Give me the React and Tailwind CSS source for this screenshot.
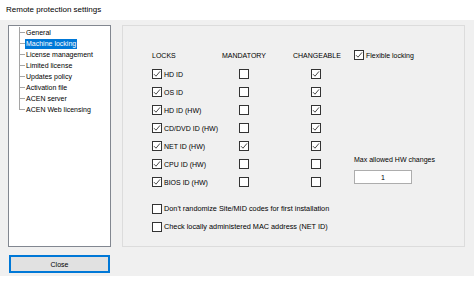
const treeItems = [
  "General",
  "Machine locking",
  "License management",
  "Limited license",
  "Updates policy",
  "Activation file",
  "ACEN server",
  "ACEN Web licensing",
]

const locks = [
  { name: "HD ID", mandatory: false, changeable: true },
  { name: "OS ID", mandatory: false, changeable: true },
  { name: "HD ID (HW)", mandatory: false, changeable: true },
  { name: "CD/DVD ID (HW)", mandatory: false, changeable: true },
  { name: "NET ID (HW)", mandatory: true, changeable: true },
  { name: "CPU ID (HW)", mandatory: false, changeable: false },
  { name: "BIOS ID (HW)", mandatory: false, changeable: false },
]

function Box({ checked }) {
  return (
    <div className="w-[10px] h-[10px] shrink-0 border border-[#333333] bg-white flex items-center justify-center">
      {checked && (
        <svg width="8" height="8" viewBox="0 0 8 8">
          <path d="M1 4.2 L3 6.2 L7 1.4" fill="none" stroke="#333333" strokeWidth="0.9" />
        </svg>
      )}
    </div>
  )
}

function Check({ checked, label }) {
  return (
    <div className="flex items-center gap-[2px]">
      <Box checked={checked} />
      <span>{label}</span>
    </div>
  )
}

export default function App() {
  return (
    <div
      className="w-[474px] h-[281px] bg-[#f0f0f0] flex flex-col text-black text-[7px] leading-none"
      style={{ fontFamily: '"Liberation Sans", Arial, sans-serif' }}
    >
      <div className="h-[20px] bg-white flex items-center pl-[6px] text-[8px]">Remote protection settings</div>

      <div className="flex pl-[8px] pt-[5px] gap-[11px]">
        <div className="flex flex-col w-[103px]">
          <div className="h-[222px] bg-white border border-[#828790] pt-[1px] pl-[10px]">
            {treeItems.map((item, i) => (
              <div key={item} className="flex items-center h-[11px]">
                <div className="w-[6px] self-stretch flex flex-col">
                  <div className="flex-1 border-l border-b border-[#a5a5a5]" />
                  <div className={i === treeItems.length - 1 ? "flex-1" : "flex-1 border-l border-[#a5a5a5]"} />
                </div>
                <span
                  className={
                    i === 1
                      ? "bg-[#0078d7] text-white px-[1px] h-[10px] flex items-center"
                      : "px-[1px] h-[10px] flex items-center"
                  }
                >
                  {item}
                </span>
              </div>
            ))}
          </div>
          <div className="mt-[8px] ml-[1px] w-[101px] h-[18px] bg-[#e1e1e1] border border-[#0078d7] shadow-[inset_0_0_0_1px_#0078d7] flex items-center justify-center">
            Close
          </div>
        </div>

        <div className="w-[343px] h-[222px] border border-[#dcdcdc] pl-[29px] pt-[19px]">
          <div className="flex">
            <div className="flex flex-col">
              <div className="flex h-[20px] items-center">
                <div className="w-[70px]">LOCKS</div>
                <div className="w-[71px]">MANDATORY</div>
                <div className="w-[61px]">CHANGEABLE</div>
              </div>
              {locks.map((l) => (
                <div key={l.name} className="flex h-[18px] items-center">
                  <div className="w-[70px]">
                    <Check checked label={l.name} />
                  </div>
                  <div className="w-[71px]">
                    <div className="w-[44px] flex justify-center">
                      <Box checked={l.mandatory} />
                    </div>
                  </div>
                  <div className="w-[61px]">
                    <div className="w-[46px] flex justify-center">
                      <Box checked={l.changeable} />
                    </div>
                  </div>
                </div>
              ))}
            </div>
            <div className="flex flex-col">
              <div className="h-[20px] flex items-center">
                <Check checked label="Flexible locking" />
              </div>
              <div className="mt-[91px]">Max allowed HW changes</div>
              <div className="mt-[7px] w-[58px] h-[14px] bg-white border border-[#adadad] flex items-center justify-center">
                1
              </div>
            </div>
          </div>
          <div className="mt-[9px] flex flex-col text-[7.3px]">
            <div className="h-[18px] flex items-center">
              <Check checked={false} label="Don't randomize Site/MID codes for first installation" />
            </div>
            <div className="h-[18px] flex items-center">
              <Check checked={false} label="Check locally administered MAC address (NET ID)" />
            </div>
          </div>
        </div>
      </div>
      <div className="flex-1" />
      <div className="h-[5px] bg-white" />
    </div>
  )
}
